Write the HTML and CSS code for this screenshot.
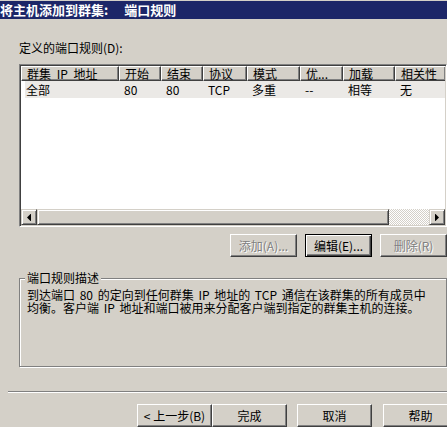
FILE: index.html
```html
<!DOCTYPE html>
<html lang="zh">
<head>
<meta charset="utf-8">
<title>端口规则</title>
<link rel="stylesheet" href="styles.css">
</head>
<body>
<div class="titlebar"><span>将主机添加到群集:</span><span class="sub">端口规则</span></div>
<div class="main">
  <div class="lbl">定义的端口规则(D):</div>
  <div class="listbox">
    <div class="lv">
      <div class="hdr">
        <div class="hc w1">群集 IP 地址</div>
        <div class="hc w2">开始</div>
        <div class="hc w3">结束</div>
        <div class="hc w4">协议</div>
        <div class="hc w5">模式</div>
        <div class="hc w6">优...</div>
        <div class="hc w7">加载</div>
        <div class="hc w8">相关性</div>
      </div>
      <div class="row">
        <div class="c first">全部</div>
        <div class="c w2">80</div>
        <div class="c w3">80</div>
        <div class="c w4">TCP</div>
        <div class="c w5">多重</div>
        <div class="c w6">--</div>
        <div class="c w7">相等</div>
        <div class="c w8">无</div>
      </div>
    </div>
    <div class="hscroll">
      <div class="sbtn"><svg width="4" height="7" viewBox="0 0 4 7"><polygon points="0,3.5 4,-0.5 4,7.5" fill="#000"/></svg></div>
      <div class="thumb"></div>
      <div class="track"></div>
      <div class="sbtn"><svg width="4" height="7" viewBox="0 0 4 7"><polygon points="4,3.5 0,-0.5 0,7.5" fill="#000"/></svg></div>
    </div>
  </div>
  <div class="btnrow">
    <button class="btn dis">添加(A)...</button>
    <button class="btn def">编辑(E)...</button>
    <button class="btn dis">删除(R)</button>
  </div>
  <fieldset class="group">
    <legend>端口规则描述</legend>
    <p class="desc">到达端口 80 的定向到任何群集 IP 地址的 TCP 通信在该群集的所有成员中<br>均衡。客户端 IP 地址和端口被用来分配客户端到指定的群集主机的连接。</p>
  </fieldset>
</div>
<div class="sep"></div>
<div class="footer">
  <button class="btn fb">&lt; 上一步(B)</button>
  <button class="btn fb">完成</button>
  <button class="btn fb cancel">取消</button>
  <button class="btn fb help">帮助</button>
</div>
</body>
</html>
```
FILE: styles.css
```css
html, body {
  margin: 0;
  padding: 0;
}
body {
  width: 447px;
  height: 427px;
  overflow: hidden;
  background: #d4d0c8;
  font-family: "Noto Sans CJK SC", "Noto Sans", sans-serif;
  font-size: 12px;
  color: #000;
}
.titlebar {
  margin-top: 1px;
  height: 18px;
  line-height: 18px;
  background: #1c2668;
  color: #fff;
  font-weight: bold;
  font-size: 13px;
  white-space: nowrap;
}
.titlebar .sub {
  margin-left: 16px;
}
.main {
  padding-left: 19px;
}
.lbl {
  margin-top: 22px;
  height: 14px;
  line-height: 14px;
}
.listbox {
  margin-top: 9px;
  width: 428px;
  height: 163px;
  box-sizing: border-box;
  border: 1px solid;
  border-color: #808080 #fff #fff #808080;
  box-shadow: inset 1px 1px 0 #404040, inset -1px -1px 0 #d4d0c8;
  padding: 1px;
  display: flex;
  flex-direction: column;
}
.lv {
  flex: 1;
  background: #fff;
  overflow: hidden;
}
.hdr {
  display: flex;
  height: 15px;
  white-space: nowrap;
}
.hc {
  flex: none;
  box-sizing: border-box;
  height: 15px;
  line-height: 13px;
  padding-left: 5px;
  background: #d4d0c8;
  border-top: 1px solid #fff;
  border-left: 1px solid #fff;
  border-right: 1px solid #404040;
  border-bottom: 1px solid #404040;
  box-shadow: inset -1px -1px 0 #808080;
  overflow: hidden;
}
.hc.w1 {
  word-spacing: 3px;
}
.w1 { width: 98px; }
.w2 { width: 42px; }
.w3 { width: 42px; }
.w4 { width: 44px; }
.w5 { width: 53px; }
.w6 { width: 43px; }
.w7 { width: 52px; }
.w8 { width: 51px; }
.row {
  display: flex;
  height: 17px;
  line-height: 17px;
  margin-left: 4px;
  background: #ebe9e6;
  white-space: nowrap;
}
.c {
  flex: none;
  box-sizing: border-box;
  padding-left: 5px;
}
.c.first {
  width: 94px;
  padding-left: 1px;
}
.hscroll {
  height: 16px;
  display: flex;
}
.sbtn {
  flex: none;
  width: 16px;
  height: 16px;
  box-sizing: border-box;
  background: #d4d0c8;
  border: 1px solid;
  border-color: #d4d0c8 #404040 #404040 #d4d0c8;
  box-shadow: inset 1px 1px 0 #fff, inset -1px -1px 0 #808080;
  display: flex;
  align-items: center;
  justify-content: center;
}
.thumb {
  flex: none;
  width: 352px;
  height: 16px;
  box-sizing: border-box;
  background: #d4d0c8;
  border: 1px solid;
  border-color: #d4d0c8 #404040 #404040 #d4d0c8;
  box-shadow: inset 1px 1px 0 #fff, inset -1px -1px 0 #808080;
}
.track {
  flex: 1;
  background-color: #d4d0c8;
  background-image: conic-gradient(#fff 25%, #d4d0c8 0 50%, #fff 0 75%, #d4d0c8 0);
  background-size: 2px 2px;
}
.btn {
  box-sizing: border-box;
  height: 23px;
  margin: 0;
  padding: 0;
  background: #d4d0c8;
  font-family: inherit;
  font-size: 12px;
  color: #000;
  border: 1px solid;
  border-color: #fff #404040 #404040 #fff;
  box-shadow: inset -1px -1px 0 #808080;
  white-space: nowrap;
}
.btnrow {
  margin-top: 7px;
  display: flex;
  justify-content: flex-end;
  gap: 8px;
}
.btnrow .btn {
  width: 67px;
}
.btn.dis {
  color: #808080;
  text-shadow: 1px 1px 0 #fff;
}
.btn.def {
  border: 1px solid #000;
  box-shadow: inset 1px 1px 0 #fff, inset -1px -1px 0 #404040, inset -2px -2px 0 #808080;
}
.group {
  margin: 14px 0 0 0;
  width: 428px;
  box-sizing: border-box;
  padding: 0 0 0 5px;
  border: 1px solid #808080;
  box-shadow: inset 1px 1px 0 #fff, 1px 1px 0 #fff;
  min-width: 0;
}
.group legend {
  padding: 0 2px;
  height: 14px;
  line-height: 14px;
  background: #d4d0c8;
}
.desc {
  margin: 3px 0 0 2px;
  height: 78px;
  line-height: 13px;
  word-spacing: 2px;
  white-space: nowrap;
}
.sep {
  margin: 24px 0 0 8px;
  border-top: 1px solid #808080;
  border-bottom: 1px solid #fff;
}
.footer {
  margin-top: 11px;
  padding-left: 137px;
  display: flex;
  white-space: nowrap;
}
.footer .btn {
  flex: none;
  width: 75px;
}
.footer .cancel {
  margin-left: 10px;
}
.footer .help {
  margin-left: 11px;
}
```
